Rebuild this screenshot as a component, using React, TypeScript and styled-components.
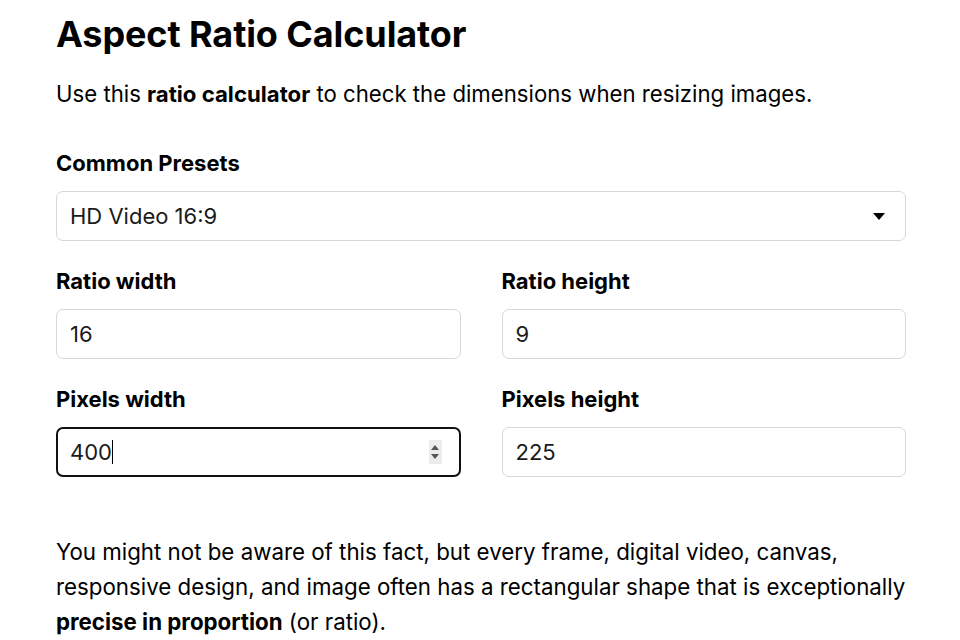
import React, { useState } from "react";
import styled, { createGlobalStyle } from "styled-components";

const Global = createGlobalStyle`
  html, body { margin: 0; padding: 0; background: #fff; }
  body { font-family: Inter, "Noto Sans", sans-serif; color: #000; }
  * { box-sizing: border-box; }
`;

const Page = styled.main`
  width: 850px;
  margin-left: 56px;
  padding-top: 14px;
`;

const Title = styled.h1`
  margin: 0;
  font-size: 36px;
  line-height: 40px;
  font-weight: 700;
  letter-spacing: -0.1px;
`;

const Lead = styled.p`
  margin: 22px 0 0;
  font-size: 22.2px;
  line-height: 35px;
  font-weight: 400;
`;

const Form = styled.div`
  margin-top: 40px;
  display: grid;
  grid-template-columns: 1fr 1fr;
  column-gap: 41px;
  row-gap: 28px;
`;

const Field = styled.label<{ $full?: boolean }>`
  display: flex;
  flex-direction: column;
  gap: 16px;
  grid-column: ${(p) => (p.$full ? "1 / -1" : "auto")};
`;

const Label = styled.span`
  font-size: 22px;
  line-height: 24px;
  font-weight: 700;
`;

const Box = styled.div<{ $focused?: boolean }>`
  height: 50px;
  display: flex;
  align-items: center;
  border: ${(p) => (p.$focused ? "2px solid #111" : "1px solid #d6d6d6")};
  border-radius: 7px;
  padding-left: ${(p) => (p.$focused ? "12px" : "13px")};
  padding-right: ${(p) => (p.$focused ? "15px" : "16px")};
  background: #fff;
`;

const Input = styled.input`
  flex: 1;
  min-width: 0;
  border: none;
  outline: none;
  background: transparent;
  font-family: Inter, "Noto Sans", sans-serif;
  font-size: 22px;
  color: #1a1a1a;
  padding: 0;
  caret-color: #000;
`;

const Caret = styled.span`
  display: inline-block;
  width: 1px;
  height: 24px;
  background: #000;
`;

const FocusText = styled.span`
  flex: 1;
  display: flex;
  align-items: center;
  font-size: 22px;
  color: #1a1a1a;
`;

const SelectText = styled.span`
  flex: 1;
  font-size: 22px;
  color: #1a1a1a;
`;

const Arrow = styled.span`
  width: 0;
  height: 0;
  border-left: 6px solid transparent;
  border-right: 6px solid transparent;
  border-top: 7px solid #000;
  margin-right: 4px;
`;

const Spinner = styled.span`
  width: 13px;
  height: 24px;
  background: #ececec;
  display: flex;
  flex-direction: column;
  align-items: center;
  justify-content: center;
  gap: 4px;
  margin-right: 2px;
`;

const Tri = styled.span<{ $up?: boolean }>`
  width: 0;
  height: 0;
  border-left: 4px solid transparent;
  border-right: 4px solid transparent;
  ${(p) => (p.$up ? "border-bottom: 5px solid #555;" : "border-top: 5px solid #555;")}
`;

const Body = styled.p`
  margin: 57px 0 0;
  font-size: 22.3px;
  line-height: 35px;
`;

export default function App() {
  const [rw, setRw] = useState("16");
  const [rh, setRh] = useState("9");
  const [ph, setPh] = useState("225");
  return (
    <>
      <Global />
      <Page>
        <Title>Aspect Ratio Calculator</Title>
        <Lead>
          Use this <strong>ratio calculator</strong> to check the dimensions when resizing images.
        </Lead>
        <Form>
          <Field $full>
            <Label>Common Presets</Label>
            <Box>
              <SelectText>HD Video 16:9</SelectText>
              <Arrow />
            </Box>
          </Field>
          <Field>
            <Label>Ratio width</Label>
            <Box>
              <Input value={rw} onChange={(e) => setRw(e.target.value)} />
            </Box>
          </Field>
          <Field>
            <Label>Ratio height</Label>
            <Box>
              <Input value={rh} onChange={(e) => setRh(e.target.value)} />
            </Box>
          </Field>
          <Field>
            <Label>Pixels width</Label>
            <Box $focused>
              <FocusText>
                400
                <Caret />
              </FocusText>
              <Spinner>
                <Tri $up />
                <Tri />
              </Spinner>
            </Box>
          </Field>
          <Field>
            <Label>Pixels height</Label>
            <Box>
              <Input value={ph} onChange={(e) => setPh(e.target.value)} />
            </Box>
          </Field>
        </Form>
        <Body>
          You might not be aware of this fact, but every frame, digital video, canvas, responsive
          design, and image often has a rectangular shape that is exceptionally{" "}
          <strong>precise in proportion</strong> (or ratio).
        </Body>
      </Page>
    </>
  );
}
